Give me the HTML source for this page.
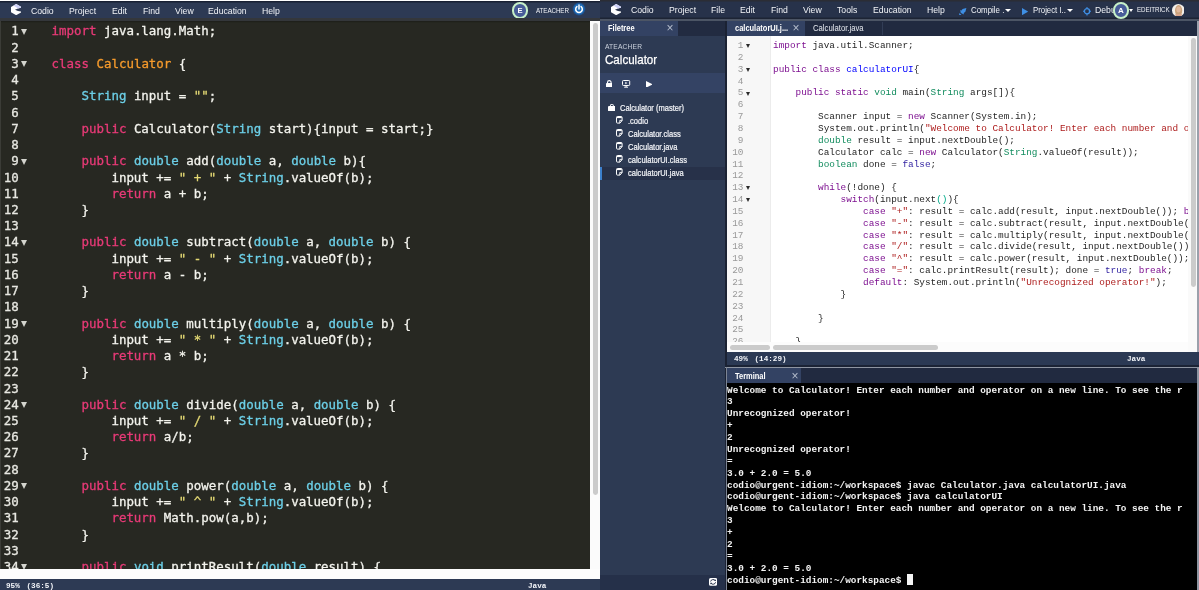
<!DOCTYPE html>
<html lang="en">
<head>
<meta charset="utf-8">
<title>Codio - Calculator</title>
<style>
html,body{margin:0;padding:0;}
body{-webkit-font-smoothing:antialiased;width:1199px;height:590px;overflow:hidden;background:#fff;position:relative;font-family:"Liberation Sans",sans-serif;}
.abs{position:absolute;}
svg.abs{z-index:2;}
.x{transform:scaleX(.87);transform-origin:0 50%;white-space:nowrap;}
/* ---------- shared ---------- */
.menu{position:absolute;top:0;left:0;right:0;color:#f1f3f7;font-size:9.9px;white-space:nowrap;}
.menu span{position:absolute;top:0;transform:scaleX(.88);transform-origin:0 50%;}
.menu span.u{font-size:7.8px;transform:scaleX(.8);letter-spacing:-.1px;}
.dd{position:absolute;top:9.2px;width:0;height:0;border-left:3.1px solid transparent;border-right:3.1px solid transparent;border-top:3.7px solid #fff;}
.logo{position:absolute;left:10.9px;top:4.3px;width:10.4px;height:11.2px;}
.av{position:absolute;border-radius:50%;box-sizing:border-box;border:2px solid #c6f0c8;background:#475c98;color:#fff;font-weight:bold;font-size:7.6px;text-align:center;}
/* ---------- left window ---------- */
#L{will-change:transform;position:absolute;left:0;top:0;width:600px;height:590px;background:#fff;overflow:hidden;}
#Lh{position:absolute;left:0;top:1px;width:600px;height:17.4px;background:#2d3a54;box-shadow:inset 0 1.6px 0 #182033;}
#Lline{position:absolute;left:0;top:18.4px;width:600px;height:2.6px;background:#34373b;}
#Le{position:absolute;left:0;top:21px;width:590px;height:548px;background:#272822;overflow:hidden;box-shadow:inset 1px 0 0 #3b3c37, inset 0 1.2px 0 #1f201b;}
#Le .code{-webkit-text-stroke:.3px;position:absolute;left:0;top:2.4px;font-family:"DejaVu Sans Mono","Liberation Mono",monospace;font-size:12.44px;line-height:16.24px;color:#f3f3ed;}
#Le .ln{height:16.24px;position:relative;}
#Le .ln b{position:absolute;left:0;width:18.8px;text-align:right;font-weight:normal;color:#e8e8e2;}
#Le .ln .f{position:absolute;left:21.4px;top:5.3px;width:0;height:0;border-left:3.4px solid transparent;border-right:3.4px solid transparent;border-top:6.2px solid #d4d4ce;font-size:0;overflow:hidden;}
#Le .ln .c{position:absolute;left:51.5px;white-space:pre;}
#Le .k{color:#e83a77;}
#Le .t{color:#6ccfe7;}
#Le .s{color:#e3d874;}
#Le .d{color:#f59a2c;}
#Le .a{color:#ae81ff;}
#Lvs{position:absolute;left:590px;top:21px;width:10px;height:548px;background:#fbfbfb;}
#Lvs i{position:absolute;left:3px;top:1.5px;width:4.8px;height:472px;border-radius:2.4px;background:#cbcbcb;}
#Lhs{position:absolute;left:0;top:569px;width:600px;height:10px;background:#fdfdfd;}
#Ls{position:absolute;left:0;top:579px;width:600px;height:11px;background:#2d3a54;color:#f4f6fa;font-family:"Liberation Mono",monospace;font-size:7.65px;line-height:14px;font-weight:bold;white-space:pre;}
/* ---------- right window ---------- */
#R{will-change:transform;position:absolute;left:600px;top:0;width:599px;height:590px;background:#2d3a53;overflow:hidden;}
#Rh{position:absolute;left:0;top:0;width:599px;height:19px;background:#27324a;box-shadow:inset 0 1.4px 0 #2b2d35, inset 0 -1.5px 0 #1d2434;}
#Rline{z-index:4;position:absolute;left:0;top:19px;width:599px;height:2px;background:#4c5565;}
#Ft{position:absolute;left:0;top:20px;width:125px;height:570px;background:#2d3a53;}
#Ftab{position:absolute;left:0;top:0;width:125px;height:16px;background:#222b41;}
#Ftab .on{position:absolute;left:0;top:1px;width:78px;height:15px;background:#334263;color:#fff;font-size:8.6px;line-height:15px;font-weight:bold;}
#Fact{position:absolute;left:0;top:53px;width:125px;height:19.5px;background:#344364;}
.tree{position:absolute;left:0;top:81.5px;width:125px;color:#f6f7fa;font-size:8.8px;line-height:13px;white-space:nowrap;}
.tree span{transform:scaleX(.855);transform-origin:0 50%;-webkit-text-stroke:.2px;}
.tree div{height:13px;position:relative;}
.tree .sel{background:#273149;}
.tree .sel:before{content:"";position:absolute;left:0;top:0;width:1.7px;height:13px;background:#3b7fcc;}
#Rsep{position:absolute;left:125px;top:20px;width:2px;height:570px;background:#1b2233;}
#Etab{position:absolute;left:127px;top:20px;width:472px;height:16px;background:#212a40;color:#fff;font-size:8.6px;line-height:15px;}
#Etab .on{position:absolute;left:0;top:1px;width:78px;height:15px;background:#334263;font-weight:bold;}
#Re{position:absolute;left:127px;top:36px;width:461.5px;height:306px;background:#fff;overflow:hidden;}
#Re .gut{position:absolute;left:0;top:0;width:42.5px;height:400px;background:#f7f7f7;border-right:1px solid #ececec;}
#Re .code{position:absolute;left:0;top:4.1px;font-family:"Liberation Mono",monospace;font-size:9.4px;line-height:11.856px;color:#262626;}
#Re .ln{height:11.856px;position:relative;}
#Re .ln b{position:absolute;left:0;width:16.4px;text-align:right;font-weight:normal;color:#999;}
#Re .ln .f{position:absolute;left:19px;top:4.2px;width:0;height:0;border-left:2.2px solid transparent;border-right:2.2px solid transparent;border-top:4.4px solid #2a2a2a;font-size:0;overflow:hidden;}
#Re .ln .c{position:absolute;left:46px;white-space:pre;}
#Re .k{color:#7d1090;}
#Re .t{color:#128c5e;}
#Re .s{color:#ad1c1c;}
#Re .d{color:#0000ff;}
#Re .a{color:#2e1fa0;}
#Re .mb{color:#00aa88;}
#Rvs{position:absolute;left:588px;top:36px;width:9.5px;height:316px;background:#fafafa;}
#Rvs i{position:absolute;left:3.2px;top:2px;width:4.8px;height:249px;border-radius:2.4px;background:#cbcbcb;}
#Rhs{position:absolute;left:127px;top:342px;width:461px;height:10px;background:#fcfcfc;}
#Rhs i{position:absolute;top:2.7px;height:5px;border-radius:2.5px;background:#cbcbcb;}
#Rs{position:absolute;left:127px;top:352px;width:472px;height:13.4px;background:#2b3954;color:#f4f6fa;font-family:"Liberation Mono",monospace;font-size:7.65px;line-height:14px;font-weight:bold;white-space:pre;}
#Rline2{position:absolute;left:125px;top:365.4px;width:474px;height:2.6px;background:#1b2335;border-bottom:1px solid #8e95a2;box-sizing:border-box;}
#Ttab{position:absolute;left:127px;top:368px;width:472px;height:15px;background:#212a40;color:#fff;font-size:8.6px;line-height:15px;}
#Ttab .on{position:absolute;left:0;top:0;width:74px;height:15px;background:#334263;font-weight:bold;}
#T{position:absolute;left:127px;top:383px;width:470.2px;height:207px;background:#000;color:#f4f4f4;font-family:"Liberation Mono",monospace;font-size:9.4px;line-height:11.875px;font-weight:bold;overflow:hidden;}
#T .in{position:absolute;left:0;top:1.5px;}
#T .in div{white-space:pre;height:11.875px;}
#T .cur{display:inline-block;width:5.6px;height:10.8px;background:#f4f4f4;vertical-align:top;margin-top:-.7px;}
#Redge{position:absolute;left:597.4px;top:21px;width:1.6px;height:331px;background:#9aa0ab;}
#Redge2{position:absolute;left:597.2px;top:367px;width:1.8px;height:223px;background:#8e95a2;}
</style>
</head>
<body>
<!-- ================= LEFT WINDOW ================= -->
<div id="L">
  <div id="Lh">
    <svg class="logo" style="top:3.3px" viewBox="0 0 10.4 11.2"><path d="M5.2,0 L10.3,2.9 L10.3,3.8 L7,4.4 L4,5.7 L7,6.9 L10.3,7.5 L10.3,8.3 L5.2,11.2 L0,8.3 L0,2.9 Z" fill="#fff"/><path d="M5.2,0 L10.3,2.9 L10.3,3.8 L7,4.4 L5.2,3.2 L2.4,1.6 Z" fill="#cdd0f6"/></svg>
    <div class="menu" style="line-height:19px;">
      <span style="left:31px">Codio</span>
      <span style="left:69px">Project</span>
      <span style="left:112px">Edit</span>
      <span style="left:143px">Find</span>
      <span style="left:175px">View</span>
      <span style="left:208px">Education</span>
      <span style="left:262px">Help</span>
      <span class="u" style="left:536px;">ATEACHER</span>
    </div>
    <div class="av" style="left:511.8px;top:1.2px;width:16.6px;height:16.6px;line-height:13.4px;">E</div>
    <svg class="abs" style="left:571.7px;top:1.4px;width:14px;height:14px" viewBox="0 0 14 14"><circle cx="7" cy="7" r="6.4" fill="#1d4f8c"/><circle cx="7" cy="7" r="5.4" fill="#1f6db8"/><path d="M4.9,4.6 A3.3,3.3 0 1 0 9.1,4.6" fill="none" stroke="#fff" stroke-width="1.5" stroke-linecap="round"/><path d="M7,3 L7,7" stroke="#fff" stroke-width="1.5" stroke-linecap="round"/></svg>
  </div>
  <div id="Lline"></div>
  <div id="Le"><div class="code">
<div class="ln"><b>1</b><i class="f">▾</i><span class="c"><span class="k">import</span> java.lang.Math;</span></div>
<div class="ln"><b>2</b><span class="c"> </span></div>
<div class="ln"><b>3</b><i class="f">▾</i><span class="c"><span class="k">class</span> <span class="d">Calculator</span> {</span></div>
<div class="ln"><b>4</b><span class="c"> </span></div>
<div class="ln"><b>5</b><span class="c">    <span class="t">String</span> input = <span class="s">""</span>;</span></div>
<div class="ln"><b>6</b><span class="c"> </span></div>
<div class="ln"><b>7</b><span class="c">    <span class="k">public</span> Calculator(<span class="t">String</span> start){input = start;}</span></div>
<div class="ln"><b>8</b><span class="c"> </span></div>
<div class="ln"><b>9</b><i class="f">▾</i><span class="c">    <span class="k">public</span> <span class="t">double</span> add(<span class="t">double</span> a, <span class="t">double</span> b){</span></div>
<div class="ln"><b>10</b><span class="c">        input += <span class="s">" + "</span> + <span class="t">String</span>.valueOf(b);</span></div>
<div class="ln"><b>11</b><span class="c">        <span class="k">return</span> a + b;</span></div>
<div class="ln"><b>12</b><span class="c">    }</span></div>
<div class="ln"><b>13</b><span class="c"> </span></div>
<div class="ln"><b>14</b><i class="f">▾</i><span class="c">    <span class="k">public</span> <span class="t">double</span> subtract(<span class="t">double</span> a, <span class="t">double</span> b) {</span></div>
<div class="ln"><b>15</b><span class="c">        input += <span class="s">" - "</span> + <span class="t">String</span>.valueOf(b);</span></div>
<div class="ln"><b>16</b><span class="c">        <span class="k">return</span> a - b;</span></div>
<div class="ln"><b>17</b><span class="c">    }</span></div>
<div class="ln"><b>18</b><span class="c"> </span></div>
<div class="ln"><b>19</b><i class="f">▾</i><span class="c">    <span class="k">public</span> <span class="t">double</span> multiply(<span class="t">double</span> a, <span class="t">double</span> b) {</span></div>
<div class="ln"><b>20</b><span class="c">        input += <span class="s">" * "</span> + <span class="t">String</span>.valueOf(b);</span></div>
<div class="ln"><b>21</b><span class="c">        <span class="k">return</span> a * b;</span></div>
<div class="ln"><b>22</b><span class="c">    }</span></div>
<div class="ln"><b>23</b><span class="c"> </span></div>
<div class="ln"><b>24</b><i class="f">▾</i><span class="c">    <span class="k">public</span> <span class="t">double</span> divide(<span class="t">double</span> a, <span class="t">double</span> b) {</span></div>
<div class="ln"><b>25</b><span class="c">        input += <span class="s">" / "</span> + <span class="t">String</span>.valueOf(b);</span></div>
<div class="ln"><b>26</b><span class="c">        <span class="k">return</span> a/b;</span></div>
<div class="ln"><b>27</b><span class="c">    }</span></div>
<div class="ln"><b>28</b><span class="c"> </span></div>
<div class="ln"><b>29</b><i class="f">▾</i><span class="c">    <span class="k">public</span> <span class="t">double</span> power(<span class="t">double</span> a, <span class="t">double</span> b) {</span></div>
<div class="ln"><b>30</b><span class="c">        input += <span class="s">" ^ "</span> + <span class="t">String</span>.valueOf(b);</span></div>
<div class="ln"><b>31</b><span class="c">        <span class="k">return</span> Math.pow(a,b);</span></div>
<div class="ln"><b>32</b><span class="c">    }</span></div>
<div class="ln"><b>33</b><span class="c"> </span></div>
<div class="ln"><b>34</b><i class="f">▾</i><span class="c">    <span class="k">public</span> <span class="t">void</span> printResult(<span class="t">double</span> result) {</span></div>
<div class="ln"><b>35</b><span class="c">        System.out.println(input + <span class="s">" = "</span> + result);</span></div>
  </div></div>
  <div id="Lvs"><i></i></div>
  <div id="Lhs"></div>
  <div id="Ls"><span class="abs" style="left:6px">95%</span><span class="abs" style="left:26.5px">(36:5)</span><span class="abs" style="left:528px">Java</span></div>
</div>

<!-- ================= RIGHT WINDOW ================= -->
<div id="R">
  <div id="Rh">
    <svg class="logo" viewBox="0 0 10.4 11.2"><path d="M5.2,0 L10.3,2.9 L10.3,3.8 L7,4.4 L4,5.7 L7,6.9 L10.3,7.5 L10.3,8.3 L5.2,11.2 L0,8.3 L0,2.9 Z" fill="#fff"/><path d="M5.2,0 L10.3,2.9 L10.3,3.8 L7,4.4 L5.2,3.2 L2.4,1.6 Z" fill="#cdd0f6"/></svg>
    <div class="menu" style="line-height:20px;">
      <span style="left:31px">Codio</span>
      <span style="left:69px">Project</span>
      <span style="left:111px">File</span>
      <span style="left:140px">Edit</span>
      <span style="left:171px">Find</span>
      <span style="left:203px">View</span>
      <span style="left:237px">Tools</span>
      <span style="left:273px">Education</span>
      <span style="left:327px">Help</span>
      <span style="left:371.1px;transform:scaleX(.8)">Compile .</span>
      <span style="left:433px;transform:scaleX(.79)">Project I..</span>
      <span style="left:495.3px">Debu</span>
      <span class="u" style="left:536.7px;">EDEITRICK</span>
    </div>
    <svg class="abs" style="left:359.4px;top:8px;width:7.4px;height:7.3px" viewBox="0 0 7.4 7.3"><path d="M7.4,0 L3.6,1 L1.2,4 L3.3,6.1 L6.4,3.7 Z" fill="#3f8fe4"/><path d="M0,7.3 L.5,4.9 L2.4,6.8 Z" fill="#3f8fe4"/><path d="M.9,2.6 L2.6,2.2 L1.6,3.6 Z M4.7,6.5 L5.1,4.8 L3.7,5.8 Z" fill="#3f8fe4"/></svg>
    <i class="dd" style="left:405.2px"></i>
    <svg class="abs" style="left:421.9px;top:8px;width:6.2px;height:7.2px" viewBox="0 0 6.2 7.2"><path d="M0,0 L6.2,3.6 L0,7.2 Z" fill="#3f8fe4"/></svg>
    <i class="dd" style="left:466.9px"></i>
    <svg class="abs" style="left:482.6px;top:7px;width:8px;height:8.6px" viewBox="0 0 8 8.6"><circle cx="4" cy="4.3" r="2.6" fill="none" stroke="#3f8fe4" stroke-width="1.3"/><path d="M4,0 V1.6 M4,7 V8.6 M0,4.3 H1.4 M6.6,4.3 H8" stroke="#3f8fe4" stroke-width="1.1"/></svg>
    <div class="av" style="left:512.6px;top:1.8px;width:16.8px;height:16.8px;line-height:13.6px;font-size:8px;z-index:3;">A</div>
    <i class="dd" style="left:529px;border-left-width:2.8px;border-right-width:2.8px"></i>
    <svg class="abs" style="left:571.6px;top:3.7px;width:12.6px;height:12.6px" viewBox="0 0 12.6 12.6"><defs><clipPath id="pc"><circle cx="6.3" cy="6.3" r="6.3"/></clipPath></defs><g clip-path="url(#pc)"><rect width="12.6" height="12.6" fill="#f3efea"/><ellipse cx="6.6" cy="6.6" rx="3.6" ry="5.6" fill="#c9a27a"/><ellipse cx="6.5" cy="5.6" rx="2.2" ry="3" fill="#e2b79b"/><rect x="3.4" y="10" width="6.4" height="3" fill="#d9a58a"/></g></svg>
  </div>
  <div id="Rline"></div>
  <div id="Ft">
    <div id="Ftab"><div class="on"><span class="abs x" style="left:8px;top:0">Filetree</span><span class="abs" style="left:66.5px;top:0;font-weight:normal;color:#b4bccb;font-size:12px">×</span></div></div>
    <div class="abs x" style="left:5px;top:21.8px;font-size:7.4px;color:#ccd2dd;letter-spacing:.2px;transform:scaleX(.9)">ATEACHER</div>
    <div class="abs x" style="left:5px;top:32.5px;font-size:12.6px;color:#fff;-webkit-text-stroke:.25px;transform:scaleX(.92)">Calculator</div>
    <div id="Fact"></div>
    <svg class="abs" style="left:5.6px;top:59.6px;width:6.6px;height:7.7px" viewBox="0 0 6.6 7.7"><rect x="0" y="3.1" width="6.6" height="4.6" rx=".8" fill="#fff"/><path d="M1.5,3.4 V2.4 A1.8,1.8 0 0 1 5.1,2.4 V3.4" fill="none" stroke="#fff" stroke-width="1.1"/></svg>
    <svg class="abs" style="left:22.4px;top:60.1px;width:8.2px;height:7.8px" viewBox="0 0 8.2 7.8"><rect x=".5" y=".5" width="7.2" height="5" rx=".9" fill="none" stroke="#fff" stroke-width="1"/><path d="M3.3,1.8 L5.3,3 L3.3,4.2 Z" fill="#fff"/><path d="M4.1,5.5 V7 M2.2,7.2 H6" stroke="#fff" stroke-width="1" fill="none"/></svg>
    <svg class="abs" style="left:45.8px;top:60.6px;width:6.6px;height:6.8px" viewBox="0 0 6.6 6.8"><path d="M0,0 L6.6,3.4 L0,6.8 Z" fill="#fff"/></svg>
    <svg class="abs" style="left:7.6px;top:84px;width:7.8px;height:7.3px" viewBox="0 0 7.8 7.3"><rect x="0" y="1.9" width="7.8" height="5.4" rx="1" fill="#fff"/><rect x="2.5" y=".5" width="2.8" height="2" rx=".6" fill="none" stroke="#fff" stroke-width="1"/></svg>
    <svg class="abs" style="left:16.3px;top:96.3px;width:6.6px;height:7.6px" viewBox="0 0 6.6 7.6"><path d="M1.4,.5 H5.2 Q6.1,.5 6.1,1.4 V4.6 L3.9,7.1 H1.4 Q.5,7.1 .5,6.2 V1.4 Q.5,.5 1.4,.5 Z" fill="none" stroke="#fff" stroke-width="1"/><path d="M6.1,4.4 H3.8 V7.1" fill="none" stroke="#fff" stroke-width=".9"/><rect x=".8" y=".8" width="5" height="1.3" fill="#fff"/></svg>
    <svg class="abs" style="left:16.3px;top:109.3px;width:6.6px;height:7.6px" viewBox="0 0 6.6 7.6"><path d="M1.4,.5 H5.2 Q6.1,.5 6.1,1.4 V4.6 L3.9,7.1 H1.4 Q.5,7.1 .5,6.2 V1.4 Q.5,.5 1.4,.5 Z" fill="none" stroke="#fff" stroke-width="1"/><path d="M6.1,4.4 H3.8 V7.1" fill="none" stroke="#fff" stroke-width=".9"/><rect x=".8" y=".8" width="5" height="1.3" fill="#fff"/></svg>
    <svg class="abs" style="left:16.3px;top:122.3px;width:6.6px;height:7.6px" viewBox="0 0 6.6 7.6"><path d="M1.4,.5 H5.2 Q6.1,.5 6.1,1.4 V4.6 L3.9,7.1 H1.4 Q.5,7.1 .5,6.2 V1.4 Q.5,.5 1.4,.5 Z" fill="none" stroke="#fff" stroke-width="1"/><path d="M6.1,4.4 H3.8 V7.1" fill="none" stroke="#fff" stroke-width=".9"/><rect x=".8" y=".8" width="5" height="1.3" fill="#fff"/></svg>
    <svg class="abs" style="left:16.3px;top:135.3px;width:6.6px;height:7.6px" viewBox="0 0 6.6 7.6"><path d="M1.4,.5 H5.2 Q6.1,.5 6.1,1.4 V4.6 L3.9,7.1 H1.4 Q.5,7.1 .5,6.2 V1.4 Q.5,.5 1.4,.5 Z" fill="none" stroke="#fff" stroke-width="1"/><path d="M6.1,4.4 H3.8 V7.1" fill="none" stroke="#fff" stroke-width=".9"/><rect x=".8" y=".8" width="5" height="1.3" fill="#fff"/></svg>
    <svg class="abs" style="left:16.3px;top:148.3px;width:6.6px;height:7.6px" viewBox="0 0 6.6 7.6"><path d="M1.4,.5 H5.2 Q6.1,.5 6.1,1.4 V4.6 L3.9,7.1 H1.4 Q.5,7.1 .5,6.2 V1.4 Q.5,.5 1.4,.5 Z" fill="none" stroke="#fff" stroke-width="1"/><path d="M6.1,4.4 H3.8 V7.1" fill="none" stroke="#fff" stroke-width=".9"/><rect x=".8" y=".8" width="5" height="1.3" fill="#fff"/></svg>

    <div class="tree">
      <div><span class="abs" style="left:20px">Calculator (master)</span></div>
      <div><span class="abs" style="left:28px">.codio</span></div>
      <div><span class="abs" style="left:28px">Calculator.class</span></div>
      <div><span class="abs" style="left:28px">Calculator.java</span></div>
      <div><span class="abs" style="left:28px">calculatorUI.class</span></div>
      <div class="sel"><span class="abs" style="left:28px">calculatorUI.java</span></div>
    </div>
  </div>
  <div class="abs" style="left:0;top:574.5px;width:125px;height:16px;background:#253049;"></div>
  <svg class="abs" style="left:109.2px;top:578.4px;width:8.2px;height:7.8px" viewBox="0 0 8.2 7.8"><rect width="8.2" height="7.8" rx="1.6" fill="#fff"/><path d="M1.6,3.5 A2.6,2.4 0 0 1 6.2,2.5 M6.6,4.3 A2.6,2.4 0 0 1 2,5.3" fill="none" stroke="#253049" stroke-width="1"/><path d="M6.9,1.3 V3.1 H5.1 Z M1.3,6.5 V4.7 H3.1 Z" fill="#253049"/></svg>
  <div id="Rsep"></div>
  <div class="abs" style="left:126px;top:367px;width:1.2px;height:223px;background:#7d8594;z-index:1"></div>
  <div id="Etab"><div class="on"><span class="abs x" style="left:8px;top:0">calculatorUI.j...</span><span class="abs" style="left:65.5px;top:0;font-weight:normal;color:#b4bccb;font-size:12px">×</span></div><span class="abs x" style="left:86px;top:1px;color:#e6e9ef;font-size:8.9px">Calculator.java</span><i class="abs" style="left:155px;top:2px;width:1px;height:13px;background:#323d56"></i></div>
  <div id="Re"><div class="gut"></div><div class="code">
<div class="ln"><b>1</b><i class="f">▾</i><span class="c"><span class="k">import</span> java.util.Scanner;</span></div>
<div class="ln"><b>2</b><span class="c"> </span></div>
<div class="ln"><b>3</b><i class="f">▾</i><span class="c"><span class="k">public</span> <span class="k">class</span> <span class="d">calculatorUI</span>{</span></div>
<div class="ln"><b>4</b><span class="c"> </span></div>
<div class="ln"><b>5</b><i class="f">▾</i><span class="c">    <span class="k">public</span> <span class="k">static</span> <span class="t">void</span> main(<span class="t">String</span> args[]){</span></div>
<div class="ln"><b>6</b><span class="c"> </span></div>
<div class="ln"><b>7</b><span class="c">        Scanner input = <span class="k">new</span> Scanner(System.in);</span></div>
<div class="ln"><b>8</b><span class="c">        System.out.println(<span class="s">"Welcome to Calculator! Enter each number and operator on a new line. To see the result, enter ="</span>);</span></div>
<div class="ln"><b>9</b><span class="c">        <span class="t">double</span> result = input.nextDouble();</span></div>
<div class="ln"><b>10</b><span class="c">        Calculator calc = <span class="k">new</span> Calculator(<span class="t">String</span>.valueOf(result));</span></div>
<div class="ln"><b>11</b><span class="c">        <span class="t">boolean</span> done = <span class="a">false</span>;</span></div>
<div class="ln"><b>12</b><span class="c"> </span></div>
<div class="ln"><b>13</b><i class="f">▾</i><span class="c">        <span class="k">while</span>(!done) {</span></div>
<div class="ln"><b>14</b><i class="f">▾</i><span class="c">            <span class="k">switch</span>(input.next<span class="mb">()</span>){</span></div>
<div class="ln"><b>15</b><span class="c">                <span class="k">case</span> <span class="s">"+"</span>: result = calc.add(result, input.nextDouble()); <span class="k">break</span>;</span></div>
<div class="ln"><b>16</b><span class="c">                <span class="k">case</span> <span class="s">"-"</span>: result = calc.subtract(result, input.nextDouble()); <span class="k">break</span>;</span></div>
<div class="ln"><b>17</b><span class="c">                <span class="k">case</span> <span class="s">"*"</span>: result = calc.multiply(result, input.nextDouble()); <span class="k">break</span>;</span></div>
<div class="ln"><b>18</b><span class="c">                <span class="k">case</span> <span class="s">"/"</span>: result = calc.divide(result, input.nextDouble()); <span class="k">break</span>;</span></div>
<div class="ln"><b>19</b><span class="c">                <span class="k">case</span> <span class="s">"^"</span>: result = calc.power(result, input.nextDouble()); <span class="k">break</span>;</span></div>
<div class="ln"><b>20</b><span class="c">                <span class="k">case</span> <span class="s">"="</span>: calc.printResult(result); done = <span class="a">true</span>; <span class="k">break</span>;</span></div>
<div class="ln"><b>21</b><span class="c">                <span class="k">default</span>: System.out.println(<span class="s">"Unrecognized operator!"</span>);</span></div>
<div class="ln"><b>22</b><span class="c">            }</span></div>
<div class="ln"><b>23</b><span class="c"> </span></div>
<div class="ln"><b>24</b><span class="c">        }</span></div>
<div class="ln"><b>25</b><span class="c"> </span></div>
<div class="ln"><b>26</b><span class="c">    }</span></div>
  </div></div>
  <div id="Rvs"><i></i></div>
  <div id="Rhs"><i style="left:2.5px;width:40px"></i><i style="left:46px;width:165px"></i></div>
  <div id="Rs"><span class="abs" style="left:7px">49%</span><span class="abs" style="left:27.5px">(14:29)</span><span class="abs" style="left:400px">Java</span></div>
  <div id="Rline2"></div>
  <div id="Ttab"><div class="on"><span class="abs x" style="left:8px;top:1px">Terminal</span><span class="abs" style="left:64.5px;top:1px;font-weight:normal;color:#b4bccb;font-size:12px">×</span></div></div>
  <div id="T"><div class="in">
<div>Welcome to Calculator! Enter each number and operator on a new line. To see the r</div>
<div>3</div>
<div>Unrecognized operator!</div>
<div>+</div>
<div>2</div>
<div>Unrecognized operator!</div>
<div>=</div>
<div>3.0 + 2.0 = 5.0</div>
<div>codio@urgent-idiom:~/workspace$ javac Calculator.java calculatorUI.java</div>
<div>codio@urgent-idiom:~/workspace$ java calculatorUI</div>
<div>Welcome to Calculator! Enter each number and operator on a new line. To see the r</div>
<div>3</div>
<div>+</div>
<div>2</div>
<div>=</div>
<div>3.0 + 2.0 = 5.0</div>
<div>codio@urgent-idiom:~/workspace$ <span class="cur"></span></div>
  </div></div>
  <div id="Redge"></div><div id="Redge2"></div>
</div>
</body>
</html>
